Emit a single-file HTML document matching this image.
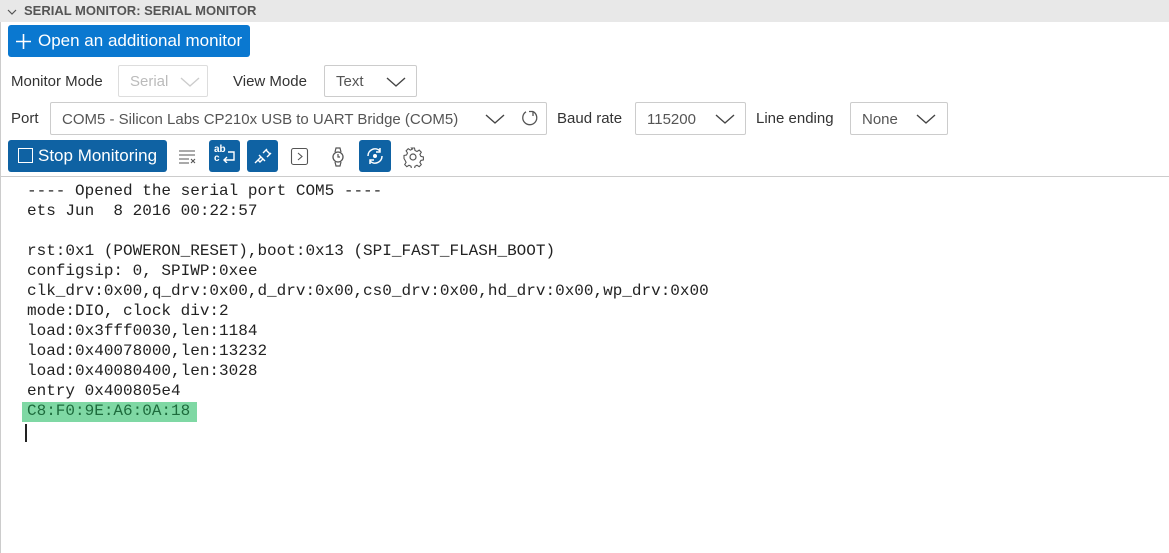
<!DOCTYPE html><html><head><style>
body{margin:0;width:1169px;height:553px;background:#fff;font-family:"Liberation Sans",sans-serif;position:relative;overflow:hidden}
.a{position:absolute}
.hdr{left:0;top:0;width:1169px;height:22px;background:#e8e8e8;font-weight:bold;font-size:13px;color:#555;line-height:21px}
.lbl{font-size:15px;color:#333;line-height:20px}
.sel{border:1px solid #ccc;border-radius:2px;box-sizing:border-box;font-size:15px;color:#555;padding-left:11px}
.chev{position:absolute;top:8px}
.ib{background:#0f62a3;border-radius:3px}
pre{margin:0;font-family:"Liberation Mono",monospace;font-size:16px;line-height:20px;color:#222}
</style></head><body>
<div class="a hdr"><span style="position:absolute;left:6px;top:0">
<svg width="12" height="20" style="vertical-align:middle"><path d="M2 8l4 4 4-4" stroke="#555" fill="none" stroke-width="1.2"/></svg></span><span style="position:absolute;left:24px">SERIAL MONITOR: SERIAL MONITOR</span></div>
<div class="a" style="left:0;top:22px;width:1px;height:531px;background:#ccc"></div>
<div class="a" style="left:8px;top:25px;width:242px;height:32px;background:#0a78d0;border-radius:3px;color:#fff;font-size:17px;line-height:32px">
<svg class="a" style="left:7px;top:8px" width="17" height="17"><path d="M8.5 1v15M1 8.5h15" stroke="#fff" stroke-width="1.6"/></svg><span style="position:absolute;left:30px">Open an additional monitor</span></div>
<div class="a lbl" style="left:11px;top:72px">Monitor Mode</div>
<div class="a sel" style="left:118px;top:65px;width:90px;height:32px;line-height:32px;color:#bbb;border-color:#ddd">Serial<svg class="chev" style="left:60px" width="22" height="16"><path d="M2 4l9 8 9-8" stroke="#ccc" fill="none" stroke-width="1.4"/></svg></div>
<div class="a lbl" style="left:233px;top:72px">View Mode</div>
<div class="a sel" style="left:324px;top:65px;width:93px;height:32px;line-height:32px">Text<svg class="chev" style="left:60px" width="22" height="16"><path d="M2 4l9 8 9-8" stroke="#444" fill="none" stroke-width="1.4"/></svg></div>
<div class="a lbl" style="left:11px;top:109px">Port</div>
<div class="a sel" style="left:50px;top:102px;width:497px;height:33px;line-height:34px;color:#555">COM5 - Silicon Labs CP210x USB to UART Bridge (COM5)
<svg class="chev" style="left:433px;top:8px" width="22" height="16"><path d="M2 4l9 8 9-8" stroke="#444" fill="none" stroke-width="1.4"/></svg>
<svg class="chev" style="left:469px;top:5px" width="20" height="20"><path d="M13 3.5A7 7 0 1 1 6 3.8M13 3.5V8M13 3.5H9" stroke="#555" fill="none" stroke-width="1.3"/></svg></div>
<div class="a lbl" style="left:557px;top:109px">Baud rate</div>
<div class="a sel" style="left:635px;top:102px;width:111px;height:33px;line-height:34px">115200<svg class="chev" style="left:78px;top:8px" width="22" height="16"><path d="M2 4l9 8 9-8" stroke="#444" fill="none" stroke-width="1.4"/></svg></div>
<div class="a lbl" style="left:756px;top:109px">Line ending</div>
<div class="a sel" style="left:850px;top:102px;width:98px;height:33px;line-height:34px">None<svg class="chev" style="left:64px;top:8px" width="22" height="16"><path d="M2 4l9 8 9-8" stroke="#444" fill="none" stroke-width="1.4"/></svg></div>
<div class="a ib" style="left:8px;top:140px;width:159px;height:32px;color:#fff;font-size:17px;line-height:32px">
<div class="a" style="left:10px;top:8px;width:13px;height:13px;border:1.5px solid #fff"></div><span style="position:absolute;left:30px">Stop Monitoring</span></div>
<svg class="a" style="left:178px;top:148px" width="20" height="18"><path d="M1 3h16M1 7h16M1 11h10M1 15h10M13 11l4 4M17 11l-4 4" stroke="#555" stroke-width="1.1"/></svg>
<div class="a ib" style="left:209px;top:140px;width:31px;height:32px"><div class="a" style="left:5px;top:5px;color:#fff;font-size:10px;line-height:9px;font-weight:bold">ab<br>c</div><svg class="a" style="left:13px;top:9px" width="14" height="14"><path d="M2 11h10V3H6M5 8l-3 3 3 3" stroke="#fff" fill="none" stroke-width="1.4"/></svg></div>
<div class="a ib" style="left:247px;top:140px;width:31px;height:32px"><svg class="a" style="left:6px;top:7px" width="20" height="18"><path d="M2 16l4-4M14 2l-3 3M18 6l-3 3M6 8l6 6M8 10l-3 3 2 2 3-3M10 6l3-3 4 4-3 3" stroke="#fff" fill="none" stroke-width="1.4"/></svg></div>
<svg class="a" style="left:290px;top:147px" width="20" height="20"><rect x="1.5" y="1.5" width="16" height="16" rx="2" stroke="#555" fill="none" stroke-width="1.1"/><path d="M8 6l4 3.5-4 3.5" stroke="#555" fill="none" stroke-width="1.1"/></svg>
<svg class="a" style="left:330px;top:146px" width="16" height="22"><circle cx="8" cy="11" r="5" stroke="#555" fill="none" stroke-width="1.3"/><path d="M5 6l1-4h4l1 4M5 16l1 4h4l1-4M8 8v3h2" stroke="#555" fill="none" stroke-width="1.2"/></svg>
<div class="a ib" style="left:359px;top:140px;width:32px;height:32px"><svg class="a" style="left:6px;top:6px" width="20" height="20"><path d="M3 10a7 7 0 0 1 12-5M17 10a7 7 0 0 1-12 5M15 2v4h-4M5 18v-4h4" stroke="#fff" fill="none" stroke-width="1.5"/><circle cx="10" cy="10" r="2" fill="#fff"/></svg></div>
<svg class="a" style="left:402px;top:146px" width="22" height="22"><circle cx="11" cy="11" r="3" stroke="#555" fill="none" stroke-width="1.2"/><path d="M9.5 2h3l.5 2.5 2 1 2.2-1.4 2.1 2.1-1.4 2.2 1 2 2.5.5v3l-2.5.5-1 2 1.4 2.2-2.1 2.1-2.2-1.4-2 1-.5 2.5h-3l-.5-2.5-2-1-2.2 1.4-2.1-2.1 1.4-2.2-1-2L2 12.5v-3l2.5-.5 1-2-1.4-2.2 2.1-2.1 2.2 1.4 2-1z" stroke="#555" fill="none" stroke-width="1.1"/></svg>
<div class="a" style="left:0;top:176px;width:1169px;height:1px;background:#ccc"></div>
<div class="a" style="left:22px;top:402px;width:175px;height:20px;background:#7fd8a4"></div>
<div class="a" style="left:25px;top:424px;width:1.5px;height:18px;background:#222"></div>
<pre class="a" style="left:27px;top:181px">---- Opened the serial port COM5 ----
ets Jun  8 2016 00:22:57

rst:0x1 (POWERON_RESET),boot:0x13 (SPI_FAST_FLASH_BOOT)
configsip: 0, SPIWP:0xee
clk_drv:0x00,q_drv:0x00,d_drv:0x00,cs0_drv:0x00,hd_drv:0x00,wp_drv:0x00
mode:DIO, clock div:2
load:0x3fff0030,len:1184
load:0x40078000,len:13232
load:0x40080400,len:3028
entry 0x400805e4
<span style="color:#1d6b3c">C8:F0:9E:A6:0A:18</span></pre>
</body></html>
